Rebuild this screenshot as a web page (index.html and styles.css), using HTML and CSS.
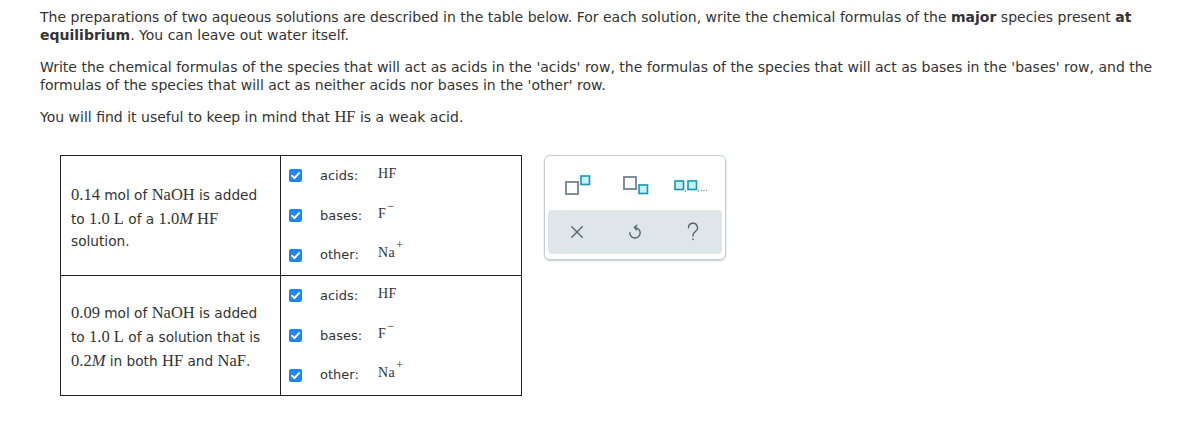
FILE: index.html
```html
<!DOCTYPE html>
<html>
<head>
<meta charset="utf-8">
<link rel="stylesheet" href="styles.css">
</head>
<body>
<div class="page">
  <p class="para">The preparations of two aqueous solutions are described in the table below. For each solution, write the chemical formulas of the <b>major</b> species present <b>at</b> <b>equilibrium</b>. You can leave out water itself.</p>
  <p class="para">Write the chemical formulas of the species that will act as acids in the 'acids' row, the formulas of the species that will act as bases in the 'bases' row, and the formulas of the species that will act as neither acids nor bases in the 'other' row.</p>
  <p class="para">You will find it useful to keep in mind that <span class="m">HF</span> is a weak acid.</p>

  <div class="work">
    <div class="grid">
      <div class="desc">
        <div class="line"><span class="m">0.14</span> mol of <span class="m">NaOH</span> is added</div>
        <div class="line">to <span class="m">1.0 L</span> of a <span class="m">1.0<i>M</i> HF</span></div>
        <div class="line short">solution.</div>
      </div>
      <div class="answers">
        <div class="row"><span class="cb"><svg viewBox="0 0 13 13" width="13" height="13"><path d="M3 6.8 L5.4 9.1 L10 4.1" fill="none" stroke="#fff" stroke-width="2" stroke-linecap="round" stroke-linejoin="round"/></svg></span><span class="lbl">acids:</span><span class="val">HF</span></div>
        <div class="row"><span class="cb"><svg viewBox="0 0 13 13" width="13" height="13"><path d="M3 6.8 L5.4 9.1 L10 4.1" fill="none" stroke="#fff" stroke-width="2" stroke-linecap="round" stroke-linejoin="round"/></svg></span><span class="lbl">bases:</span><span class="val">F<sup>−</sup></span></div>
        <div class="row"><span class="cb"><svg viewBox="0 0 13 13" width="13" height="13"><path d="M3 6.8 L5.4 9.1 L10 4.1" fill="none" stroke="#fff" stroke-width="2" stroke-linecap="round" stroke-linejoin="round"/></svg></span><span class="lbl">other:</span><span class="val">Na<sup>+</sup></span></div>
      </div>
      <div class="desc">
        <div class="line"><span class="m">0.09</span> mol of <span class="m">NaOH</span> is added</div>
        <div class="line">to <span class="m">1.0 L</span> of a solution that is</div>
        <div class="line"><span class="m">0.2<i>M</i></span> in both <span class="m">HF</span> and <span class="m">NaF</span>.</div>
      </div>
      <div class="answers">
        <div class="row"><span class="cb"><svg viewBox="0 0 13 13" width="13" height="13"><path d="M3 6.8 L5.4 9.1 L10 4.1" fill="none" stroke="#fff" stroke-width="2" stroke-linecap="round" stroke-linejoin="round"/></svg></span><span class="lbl">acids:</span><span class="val">HF</span></div>
        <div class="row"><span class="cb"><svg viewBox="0 0 13 13" width="13" height="13"><path d="M3 6.8 L5.4 9.1 L10 4.1" fill="none" stroke="#fff" stroke-width="2" stroke-linecap="round" stroke-linejoin="round"/></svg></span><span class="lbl">bases:</span><span class="val">F<sup>−</sup></span></div>
        <div class="row"><span class="cb"><svg viewBox="0 0 13 13" width="13" height="13"><path d="M3 6.8 L5.4 9.1 L10 4.1" fill="none" stroke="#fff" stroke-width="2" stroke-linecap="round" stroke-linejoin="round"/></svg></span><span class="lbl">other:</span><span class="val">Na<sup>+</sup></span></div>
      </div>
    </div>

    <div class="palette">
      <div class="tools">
        <div class="tool">
          <svg width="30" height="24" viewBox="0 0 30 24">
            <rect x="4" y="9" width="12" height="12" fill="#fff" stroke="#7d9097" stroke-width="2"/>
            <rect x="19" y="3" width="8.5" height="8.5" fill="#c9eef3" stroke="#0e9bb0" stroke-width="1.6"/>
          </svg>
        </div>
        <div class="tool">
          <svg width="30" height="24" viewBox="0 0 30 24">
            <rect x="4" y="4" width="12" height="12" fill="#fff" stroke="#7d9097" stroke-width="2"/>
            <rect x="19" y="12" width="8.5" height="8.5" fill="#c9eef3" stroke="#0e9bb0" stroke-width="1.6"/>
          </svg>
        </div>
        <div class="tool">
          <svg width="40" height="24" viewBox="0 0 40 24">
            <rect x="2" y="8" width="8.5" height="8.5" fill="#c9eef3" stroke="#0e9bb0" stroke-width="1.6"/>
            <rect x="15" y="8" width="8.5" height="8.5" fill="#c9eef3" stroke="#0e9bb0" stroke-width="1.6"/>
            <path d="M12.5 17 L12.2 19" stroke="#7d9097" stroke-width="1"/>
            <path d="M25.5 17 L25.2 19" stroke="#7d9097" stroke-width="1"/>
            <circle cx="28.5" cy="17.5" r="0.7" fill="#7d9097"/>
            <circle cx="31" cy="17.5" r="0.7" fill="#7d9097"/>
            <circle cx="33.5" cy="17.5" r="0.7" fill="#7d9097"/>
          </svg>
        </div>
      </div>
      <div class="actions">
        <div class="tool">
          <svg width="14" height="14" viewBox="0 0 14 14"><path d="M1.8 1.8 L12.2 12.2 M12.2 1.8 L1.8 12.2" stroke="#4f6770" stroke-width="1.4" stroke-linecap="round"/></svg>
        </div>
        <div class="tool">
          <svg width="14" height="18" viewBox="0 0 14 18"><path d="M7 4.6 A5.2 5.2 0 1 1 1.8 9.8" fill="none" stroke="#4f6770" stroke-width="1.4" stroke-linecap="round"/><path d="M8.8 2.2 L6.4 4.6 L8.8 7" fill="none" stroke="#4f6770" stroke-width="1.4" stroke-linecap="round" stroke-linejoin="round"/></svg>
        </div>
        <div class="tool">
          <svg width="14" height="20" viewBox="0 0 14 20"><path d="M2.5 5.8 A4.5 4.5 0 1 1 9.3 9.6 C7.7 10.6 7 11.4 7 13.2 L7 14" fill="none" stroke="#4f6770" stroke-width="1.4" stroke-linecap="round"/><circle cx="7" cy="17.3" r="0.9" fill="#4f6770"/></svg>
        </div>
      </div>
    </div>
  </div>
</div>
</body>
</html>
```

FILE: styles.css
```css
html, body {
  margin: 0;
  padding: 0;
  background: #fff;
}

.page {
  padding: 8px 12px 0 40px;
  font-family: "DejaVu Sans", Verdana, sans-serif;
  font-size: 14px;
  line-height: 18px;
  color: #333;
}

.para {
  margin: 0 0 14px 0;
}

.para b {
  font-weight: bold;
}

.m {
  font-family: "Liberation Serif", "Times New Roman", serif;
  font-size: 16.5px;
  line-height: 1;
}

.m i {
  font-style: italic;
}

.work {
  display: flex;
  align-items: flex-start;
  gap: 22px;
  margin: 29px 0 0 20px;
}

.grid {
  display: grid;
  grid-template-columns: 220px 241px;
  border-top: 1px solid #222;
  border-left: 1px solid #222;
}

.desc, .answers {
  border-right: 1px solid #222;
  border-bottom: 1px solid #222;
  height: 120px;
  box-sizing: border-box;
}

.desc {
  display: flex;
  flex-direction: column;
  justify-content: center;
  padding: 2px 0 0 10px;
  font-size: 13.7px;
}

.line {
  line-height: 24px;
  height: 24px;
  white-space: nowrap;
}

.line.short {
  height: 20px;
  line-height: 20px;
}

.answers {
  display: flex;
  flex-direction: column;
  font-size: 13px;
}

.row {
  height: 40px;
  display: flex;
  align-items: center;
  padding-left: 8px;
}

.cb {
  width: 13px;
  height: 13px;
  border-radius: 2px;
  background: #1e86ee;
  display: flex;
  align-items: center;
  justify-content: center;
  margin-right: 18px;
}

.cb svg {
  display: block;
}

.lbl {
  width: 58px;
  color: #333;
}

.val {
  font-family: "Liberation Serif", "Times New Roman", serif;
  font-size: 14px;
  letter-spacing: 0.5px;
  position: relative;
  top: -2px;
}

.val sup {
  font-size: 12px;
  vertical-align: 8px;
  line-height: 0;
  margin-left: 1px;
}

.palette {
  width: 182px;
  height: 105px;
  box-sizing: border-box;
  border: 1px solid #c3ccd0;
  border-radius: 6px;
  box-shadow: 0 1px 2px rgba(80, 100, 110, 0.35);
  padding: 3px;
  display: flex;
  flex-direction: column;
}

.tools {
  height: 51px;
  display: grid;
  grid-template-columns: 1fr 1fr 1fr;
}

.tool {
  display: flex;
  align-items: center;
  justify-content: center;
}

.tool svg {
  display: block;
}

.actions {
  height: 44px;
  background: #dfe6e9;
  border-radius: 4px;
  display: grid;
  grid-template-columns: 1fr 1fr 1fr;
}
```
